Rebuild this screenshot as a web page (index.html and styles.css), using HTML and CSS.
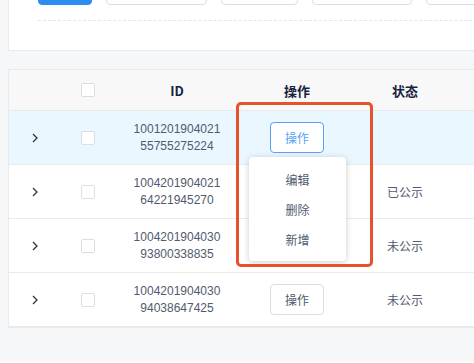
FILE: index.html
```html
<!DOCTYPE html>
<html lang="zh-CN">
<head>
    <meta charset="UTF-8">
    <meta name="viewport" content="width=device-width, initial-scale=1.0">
    <title>公示列表</title>
    <link rel="stylesheet" href="styles.css">
</head>
<body>
    <div class="main">
        <!-- Filter bar (scrolled partly out of view) -->
        <div class="filter-card">
            <div class="filter-buttons">
                <button class="btn btn-primary w-54"></button>
                <button class="btn w-101"></button>
                <button class="btn w-77"></button>
                <button class="btn w-100"></button>
                <button class="btn w-100"></button>
            </div>
            <div class="dashed"></div>
        </div>

        <!-- Table -->
        <div class="table-card">
            <div class="row head">
                <div class="cell"></div>
                <div class="cell"><span class="checkbox"></span></div>
                <div class="cell">ID</div>
                <div class="cell">操作</div>
                <div class="cell">状态</div>
                <div class="cell"></div>
            </div>

            <div class="row active">
                <div class="cell"><svg class="chevron" viewBox="0 0 6 10" width="6" height="10"><path d="M1 1l4 4-4 4" fill="none" stroke="#333" stroke-width="1.3"/></svg></div>
                <div class="cell"><span class="checkbox"></span></div>
                <div class="cell id">1001201904021<br>55755275224</div>
                <div class="cell"><button class="op op-hover">操作</button></div>
                <div class="cell"></div>
                <div class="cell"></div>
            </div>

            <div class="row">
                <div class="cell"><svg class="chevron" viewBox="0 0 6 10" width="6" height="10"><path d="M1 1l4 4-4 4" fill="none" stroke="#333" stroke-width="1.3"/></svg></div>
                <div class="cell"><span class="checkbox"></span></div>
                <div class="cell id">1004201904021<br>64221945270</div>
                <div class="cell"><button class="op">操作</button></div>
                <div class="cell">已公示</div>
                <div class="cell"></div>
            </div>

            <div class="row">
                <div class="cell"><svg class="chevron" viewBox="0 0 6 10" width="6" height="10"><path d="M1 1l4 4-4 4" fill="none" stroke="#333" stroke-width="1.3"/></svg></div>
                <div class="cell"><span class="checkbox"></span></div>
                <div class="cell id">1004201904030<br>93800338835</div>
                <div class="cell"><button class="op">操作</button></div>
                <div class="cell">未公示</div>
                <div class="cell"></div>
            </div>

            <div class="row">
                <div class="cell"><svg class="chevron" viewBox="0 0 6 10" width="6" height="10"><path d="M1 1l4 4-4 4" fill="none" stroke="#333" stroke-width="1.3"/></svg></div>
                <div class="cell"><span class="checkbox"></span></div>
                <div class="cell id">1004201904030<br>94038647425</div>
                <div class="cell"><button class="op">操作</button></div>
                <div class="cell">未公示</div>
                <div class="cell"></div>
            </div>

            <!-- Dropdown opened from the first row's button -->
            <ul class="dropdown">
                <li>编辑</li>
                <li>删除</li>
                <li>新增</li>
            </ul>

            <!-- Annotation highlight -->
            <div class="highlight"></div>
        </div>
    </div>
</body>
</html>
```

FILE: styles.css
```css
body {
    margin: 0;
    background-color: #ffffff;
    font-family: "Liberation Sans", "Noto Sans CJK SC", sans-serif;
    color: #515a6e;
    font-size: 12px;
    overflow: hidden;
}
.main {
    height: 361px;
    background-color: #f5f7f9;
    padding-left: 8px;
    overflow: hidden;
}
.filter-card {
    width: 620px;
    margin-top: -27px;
    height: 78px;
    box-sizing: border-box;
    background-color: #fff;
    border-left: 1px solid #e8eaec;
    border-bottom: 1px solid #e8eaec;
    padding-left: 29px;
}
.filter-buttons {
    display: flex;
    gap: 14px;
}
.btn {
    height: 32px;
    border: 1px solid #dcdee2;
    border-radius: 4px;
    background-color: #fff;
    padding: 0;
}
.btn-primary {
    background-color: #2d8cf0;
    border-color: #2d8cf0;
}
.w-54 { width: 54px; }
.w-101 { width: 101px; }
.w-77 { width: 77px; }
.w-100 { width: 100px; }
.dashed {
    margin-top: 15px;
    border-top: 1px dashed #e3e5e8;
}
.table-card {
    position: relative;
    width: 620px;
    margin-top: 18px;
    background-color: #fff;
    border: 1px solid #e8eaec;
}
.row {
    display: grid;
    grid-template-columns: 49px 60px 118px 122px 94px 1fr;
    height: 54px;
    border-bottom: 1px solid #e8eaec;
    box-sizing: border-box;
}
.row:last-of-type {
    border-bottom: none;
}
.row.head {
    height: 41px;
    background-color: #f8f8f9;
    font-size: 13px;
    font-weight: bold;
    color: #17233d;
}
.row.active {
    background-color: #ebf7ff;
}
.cell {
    display: flex;
    align-items: center;
    justify-content: center;
    text-align: center;
    font-family: "Noto Sans CJK SC", "Liberation Sans", sans-serif;
}
.cell.id {
    font-family: "Liberation Sans", sans-serif;
    line-height: 17px;
}
.checkbox {
    width: 14px;
    height: 14px;
    box-sizing: border-box;
    border: 1px solid #dcdee2;
    border-radius: 2px;
    background-color: #fff;
}
.chevron {
    margin-left: 2px;
}
.op {
    width: 54px;
    height: 31px;
    border: 1px solid #dcdee2;
    border-radius: 4px;
    background-color: #fff;
    color: #515a6e;
    font-size: 12px;
    font-family: "Noto Sans CJK SC", sans-serif;
    padding: 0;
}
.op-hover {
    border-color: #57a3f3;
    color: #57a3f3;
}
.dropdown {
    position: absolute;
    left: 240px;
    top: 87px;
    width: 97px;
    margin: 0;
    padding: 8px 0 6px;
    list-style: none;
    background-color: #fff;
    border-radius: 4px;
    box-shadow: 0 1px 6px rgba(0, 0, 0, 0.2);
    font-family: "Noto Sans CJK SC", sans-serif;
}
.dropdown li {
    height: 30px;
    line-height: 30px;
    text-align: center;
}
.highlight {
    position: absolute;
    left: 227px;
    top: 32px;
    width: 137px;
    height: 165px;
    box-sizing: border-box;
    border: 3px solid #e5522c;
    border-radius: 5px;
}
```
